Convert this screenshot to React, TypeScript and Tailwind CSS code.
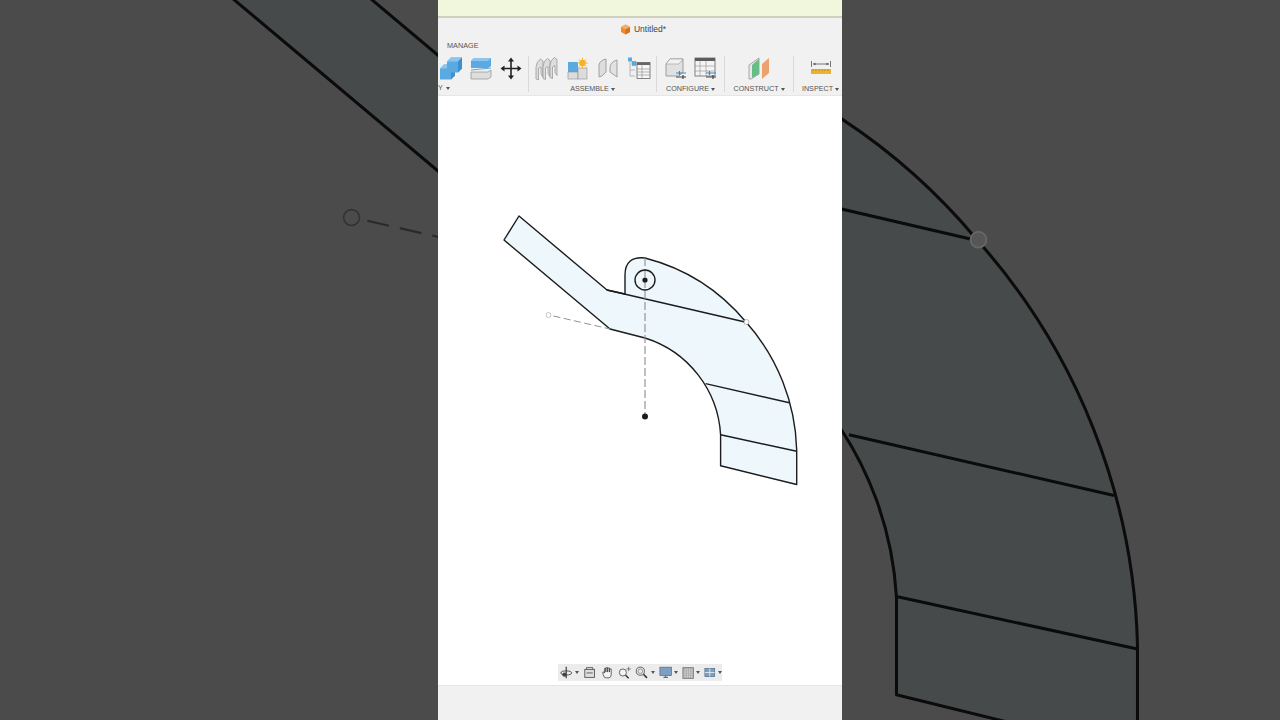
import React from "react";

type PartProps = { fill: string; line: string; width: number; guide: string; hollow: string; ring: string; viewBox: string; className: string };

function Part({ fill, line, width, guide, hollow, ring, viewBox, className }: PartProps) {
  const outline =
    "M519 216 L504 240 L610 329 L645 338 A108 108 0 0 1 720.6 435 L720.6 465.7 L796.7 484.5 L796.7 450 A200 200 0 0 0 746 322 A195 195 0 0 0 645 258 Q625 256 625 275 L625 294 L607 290 Z";
  return (
    <svg viewBox={viewBox} preserveAspectRatio="none" className={className}>
      <path d={outline} fill={fill} stroke={line} strokeWidth={width} strokeLinejoin="round" />
      <path d="M607 290 L745 322 M705.6 383.6 L789.3 402.8 M720.6 434.7 L796.7 451.3" fill="none" stroke={line} strokeWidth={width} />
      <path d="M645 258 L645 416" fill="none" stroke={guide} strokeWidth={width * 0.8} strokeDasharray="8 3" />
      <path d="M553.5 316 L610 329" fill="none" stroke={guide} strokeWidth={width * 0.7} strokeDasharray="7 3.5" />
      <circle cx="548.5" cy="315" r="2.5" fill={hollow} stroke={ring} strokeWidth="0.5" />
      <circle cx="746.5" cy="322" r="2.5" fill={hollow} stroke={ring} strokeWidth="0.6" />
      <circle cx="645" cy="280" r="10" fill="none" stroke={line} strokeWidth={width} />
      <circle cx="645" cy="280" r="2.6" fill={line} />
      <circle cx="645" cy="416.5" r="3" fill={line} />
    </svg>
  );
}

function Solid({ x, y }: { x: number; y: number }) {
  return (
    <g transform={`translate(${x} ${y})`}>
      <path d="M0 4 L4 0 H15 V11 L11 15 H0 Z" fill="#5aa9e0" />
      <path d="M0 4 L4 0 H15 L11 4 Z" fill="#8cc6ee" />
      <path d="M11 4 L15 0 V11 L11 15 Z" fill="#3f8fcb" />
    </g>
  );
}

function Sep() {
  return <div className="w-px h-[36px] bg-[#d9d9d9] shrink-0" />;
}

function Tri() {
  return <span className="w-0 h-0 border-x-[2px] border-x-transparent border-t-[3px] border-t-[#555555]" />;
}

function Label({ children }: { children: React.ReactNode }) {
  return (
    <div className="mt-[4px] h-[10px] flex items-center justify-center gap-[2px] text-[7.2px] leading-[10px] text-[#555555] whitespace-nowrap">
      {children}
      <Tri />
    </div>
  );
}

function Ruler() {
  return (
    <svg width="22" height="16" viewBox="0 0 22 16">
      <path d="M1.5 1 V7 M20.5 1 V7 M3 4 H19" stroke="#555" strokeWidth="0.8" fill="none" />
      <path d="M3 4 L5.5 2.7 V5.3 Z M19 4 L16.5 2.7 V5.3 Z" fill="#555" />
      <rect x="1" y="9" width="20" height="5" fill="#edb132" />
      <path d="M3 9 V11 M6 9 V11 M9 9 V11 M12 9 V11 M15 9 V11 M18 9 V11" stroke="#a87a1c" strokeWidth="0.6" />
    </svg>
  );
}

function Slider({ x, y }: { x: number; y: number }) {
  return (
    <g transform={`translate(${x} ${y})`}>
      <path d="M0 2 H10" stroke="#3a85bd" strokeWidth="1" />
      <path d="M0 6 H10" stroke="#444" strokeWidth="1" />
      <path d="M3.5 0 V4" stroke="#3a85bd" strokeWidth="1.2" />
      <path d="M7 4 V8" stroke="#444" strokeWidth="1.2" />
    </g>
  );
}

function Joint({ x, y }: { x: number; y: number }) {
  return (
    <path
      transform={`translate(${x} ${y})`}
      d="M1 21 V9 Q1.5 3 5.5 1 L8 3 V19 L6 16 V9 L3.5 10.5 V22 Z"
      fill="#dddddd"
      stroke="#909090"
      strokeWidth="0.7"
    />
  );
}

export default function App() {
  return (
    <div className="w-[1280px] h-[720px] flex overflow-hidden bg-[#4b4b4b] font-['Liberation_Sans',Arial,sans-serif]">
      <div className="w-[438px] h-full shrink-0 blur-[0.6px]">
        <Part
          viewBox="437.5 246.3 138.3 227.4"
          className="block w-full h-full"
          fill="#464a4b"
          line="#0b0b0b"
          width={0.95}
          guide="#2a2a2a"
          hollow="#4b4b4b"
          ring="#333333"
        />
      </div>

      <main className="w-[404px] h-full shrink-0 flex flex-col bg-white">
        <div className="h-[16px] bg-[#f1f7dc] shrink-0" />
        <div className="h-[2px] bg-[#cdd0bd] shrink-0" />

        <header className="h-[78px] shrink-0 bg-[#f1f1f1] flex flex-col border-b border-[#e6e6e6]">
          <div className="h-[22px] flex items-center justify-center gap-[3px] pl-[6px] pt-[1px] text-[8.5px] text-[#444444]">
            <svg width="11" height="11" viewBox="0 0 11 11">
              <path d="M5.5 0.5 L10 3 V8 L5.5 10.5 L1 8 V3 Z" fill="#ee8a2e" />
              <path d="M5.5 0.5 L10 3 L5.5 5.5 L1 3 Z" fill="#f6ad66" />
              <path d="M5.5 5.5 L10 3 V8 L5.5 10.5 Z" fill="#d8701a" />
            </svg>
            <span>Untitled*</span>
          </div>
          <div className="h-[12px] pl-[9px] text-[7.3px] leading-[12px] text-[#555555]">MANAGE</div>

          <div className="h-[43px] flex items-start overflow-hidden pl-[2px] pt-[4px]">
            <div className="w-[88px] shrink-0 flex flex-col">
              <div className="h-[24px] flex items-center gap-[8px]">
                <svg width="22" height="23" viewBox="0 0 22 23">
                  <Solid x={0} y={7.5} />
                  <Solid x={7} y={0.5} />
                </svg>
                <svg width="22" height="23" viewBox="0 0 22 23">
                  <path d="M1 4 L4 1 H21 V9 L18 11 H1 Z" fill="#5aa9e0" />
                  <path d="M1 4 L4 1 H21 L18 4 Z" fill="#8cc6ee" />
                  <path d="M1 13 L21 11" stroke="#5aa9e0" strokeWidth="1" />
                  <path d="M1 15 H18 L21 13 V20 L18 22 H1 Z" fill="#dedede" stroke="#8f8f8f" strokeWidth="0.7" />
                </svg>
                <svg width="22" height="23" viewBox="0 0 22 23">
                  <path d="M11 2 V21 M2 11.5 H20" stroke="#222" strokeWidth="1.6" />
                  <path d="M11 0.5 L14 4.5 H8 Z M11 22.5 L14 18.5 H8 Z M0.5 11.5 L4.5 8.5 V14.5 Z M21.5 11.5 L17.5 8.5 V14.5 Z" fill="#222" />
                </svg>
              </div>
              <div className="mt-[3px] h-[10px] flex items-center gap-[3px] text-[7.2px] leading-[10px] text-[#555555] -ml-[2px]">
                Y
                <Tri />
              </div>
            </div>
            <Sep />

            <div className="w-[127px] shrink-0 flex flex-col items-center">
              <div className="h-[24px] flex items-center gap-[8px]">
                <svg width="24" height="23" viewBox="0 0 24 23">
                  <Joint x={0} y={1} />
                  <Joint x={7} y={0.5} />
                  <Joint x={14} y={-0.5} />
                </svg>
                <svg width="22" height="23" viewBox="0 0 22 23">
                  <rect x="1" y="5" width="10" height="10" fill="#5aa9e0" />
                  <rect x="1" y="15" width="10" height="7" fill="#dcdcdc" stroke="#8f8f8f" strokeWidth="0.6" />
                  <rect x="11" y="11" width="9" height="11" fill="#dcdcdc" stroke="#8f8f8f" strokeWidth="0.6" />
                  <circle cx="15.5" cy="6" r="3.2" fill="#f5b324" />
                  <path d="M15.5 0.5 V11.5 M10 6 H21 M11.8 2.3 L19.2 9.7 M19.2 2.3 L11.8 9.7" stroke="#f5b324" strokeWidth="0.9" />
                </svg>
                <svg width="22" height="23" viewBox="0 0 22 23">
                  <path d="M2 20 V8 Q3 3 9 2 V15 L5 19 Z" fill="#dddddd" stroke="#909090" strokeWidth="0.8" />
                  <path d="M20 20 V3 Q13 5 13 11 V15 Z" fill="#e2e2e2" stroke="#909090" strokeWidth="0.8" />
                </svg>
                <svg width="24" height="23" viewBox="0 0 24 23">
                  <rect x="1" y="0.5" width="4" height="4" fill="#5aa9e0" />
                  <rect x="5" y="4.5" width="4" height="4" fill="#5aa9e0" stroke="#3a85bd" strokeWidth="0.4" />
                  <path d="M3 5 V19 H8 M3 13 H8" stroke="#a8a8a8" strokeWidth="0.8" fill="none" />
                  <rect x="10" y="5.5" width="13" height="16" fill="#f7f7f7" stroke="#666" strokeWidth="0.8" />
                  <rect x="10" y="5.5" width="13" height="2.5" fill="#666" />
                  <path d="M10 12 H23 M10 15 H23 M10 18 H23 M15 8 V21" stroke="#888" strokeWidth="0.6" />
                </svg>
              </div>
              <Label>ASSEMBLE</Label>
            </div>
            <Sep />

            <div className="w-[67px] shrink-0 flex flex-col items-center">
              <div className="h-[24px] flex items-center gap-[7px]">
                <svg width="22" height="23" viewBox="0 0 22 23">
                  <path d="M1 7 L5 2 H18 V15 L14 19 H1 Z" fill="#e1e1e1" stroke="#8a8a8a" strokeWidth="0.8" />
                  <path d="M1 7 L5 2 H18 L14 7 Z" fill="#f1f1f1" stroke="#8a8a8a" strokeWidth="0.5" />
                  <Slider x={11} y={14} />
                </svg>
                <svg width="23" height="23" viewBox="0 0 23 23">
                  <rect x="1" y="1" width="20" height="18" fill="#f4f4f4" stroke="#666" strokeWidth="0.8" />
                  <rect x="1" y="1" width="20" height="3" fill="#5c5c5c" />
                  <path d="M6 4 V19 M12 4 V19 M1 9 H21 M1 14 H21" stroke="#8f8f8f" strokeWidth="0.6" />
                  <Slider x={12} y={14} />
                </svg>
              </div>
              <Label>CONFIGURE</Label>
            </div>
            <Sep />

            <div className="w-[68px] shrink-0 flex flex-col items-center">
              <div className="h-[24px] flex items-center">
                <svg width="22" height="23" viewBox="0 0 22 23">
                  <path d="M1 22 V8 L11 1 V17 L3 22 Z" fill="#e8e8e8" stroke="#8a8a8a" strokeWidth="0.7" />
                  <path d="M4 21 V8 L11 2 V17 Z" fill="#67bd86" />
                  <path d="M14 22 V7 L21 1 V16 Z" fill="#eba26f" />
                </svg>
              </div>
              <Label>CONSTRUCT</Label>
            </div>
            <Sep />

            <div className="flex-1 flex flex-col items-center pl-[5px]">
              <div className="h-[24px] flex items-center">
                <Ruler />
              </div>
              <Label>INSPECT</Label>
            </div>
          </div>
        </header>

        <div className="flex-1 relative min-h-0 bg-white">
          <Part
            viewBox="438 96 404 589"
            className="block w-full h-full"
            fill="#eef8fc"
            line="#1c1c1c"
            width={1.4}
            guide="#8f8f8f"
            hollow="#ffffff"
            ring="#8f8f8f"
          />
          <div className="absolute left-[120px] top-[568px] w-[164px] h-[17px] bg-[#ececec] flex items-center gap-[2px] pl-[2px]">
            <svg width="15" height="15" viewBox="0 0 15 15">
              <ellipse cx="7" cy="8" rx="6" ry="2.3" fill="none" stroke="#444" strokeWidth="1" />
              <path d="M7 1 V14" stroke="#444" strokeWidth="1.4" />
              <circle cx="5" cy="10" r="2.4" fill="#444" />
            </svg>
            <Tri />
            <svg width="15" height="15" viewBox="0 0 15 15" className="ml-[2px]">
              <rect x="2" y="4" width="11" height="9" fill="#dedede" stroke="#555" strokeWidth="1" />
              <path d="M4 4 V2 H11 V4 M4 8 H11" stroke="#555" strokeWidth="1" fill="none" />
            </svg>
            <svg width="15" height="15" viewBox="0 0 15 15" className="ml-[2px]">
              <path d="M4 13 Q2 10 2 7 L3.5 7 L4 8 V3 H5.5 V7 V2 H7.5 V7 V2.5 H9.5 V7 V3.5 H11.5 V10 Q11.5 13 9 13.5 H6 Z" fill="#f4f4f4" stroke="#444" strokeWidth="0.9" />
            </svg>
            <svg width="15" height="15" viewBox="0 0 15 15" className="ml-[2px]">
              <circle cx="5.5" cy="7.5" r="4" fill="#f4f4f4" stroke="#555" strokeWidth="1" />
              <path d="M8.5 10.5 L12 14" stroke="#333" strokeWidth="1.6" />
              <path d="M12 1 V6 M9.5 3.5 H14.5" stroke="#555" strokeWidth="0.8" />
            </svg>
            <svg width="15" height="15" viewBox="0 0 15 15" className="ml-[2px]">
              <circle cx="6" cy="6" r="4.6" fill="#e8e8e8" stroke="#555" strokeWidth="1" />
              <circle cx="6" cy="6" r="2.6" fill="none" stroke="#777" strokeWidth="0.8" />
              <path d="M9.5 9.5 L13.5 13.5" stroke="#333" strokeWidth="1.8" />
            </svg>
            <Tri />
            <svg width="15" height="15" viewBox="0 0 15 15" className="ml-[2px]">
              <rect x="1" y="1.5" width="13" height="9.5" fill="#7f9fc2" stroke="#5c6b7c" strokeWidth="0.8" />
              <path d="M5 13 H10 M7.5 11 V13" stroke="#5c6b7c" strokeWidth="1.2" />
            </svg>
            <Tri />
            <svg width="14" height="14" viewBox="0 0 14 14" className="ml-[2px]">
              <rect x="1" y="1" width="12" height="12" fill="#a3a3a3" stroke="#666" strokeWidth="0.8" />
              <path d="M3.5 1 V13 M6 1 V13 M8.5 1 V13 M11 1 V13 M1 3.5 H13 M1 6 H13 M1 8.5 H13 M1 11 H13" stroke="#e4e4e4" strokeWidth="0.5" />
            </svg>
            <Tri />
            <svg width="13" height="13" viewBox="0 0 13 13" className="ml-[2px]">
              <rect x="1" y="2" width="11" height="9" fill="#7f9fc2" stroke="#4f6c8c" strokeWidth="0.8" />
              <path d="M6.5 2 V11 M1 6.5 H12" stroke="#eef2f6" strokeWidth="0.9" />
            </svg>
            <Tri />
          </div>
        </div>

        <footer className="h-[35px] shrink-0 bg-[#f1f1f1] border-t border-[#e6e6e6]" />
      </main>

      <div className="flex-1 h-full blur-[0.6px]">
        <Part
          viewBox="703.4 246.3 138.3 227.4"
          className="block w-full h-full"
          fill="#464a4b"
          line="#0b0b0b"
          width={0.95}
          guide="#2a2a2a"
          hollow="#565656"
          ring="#666666"
        />
      </div>
    </div>
  );
}
